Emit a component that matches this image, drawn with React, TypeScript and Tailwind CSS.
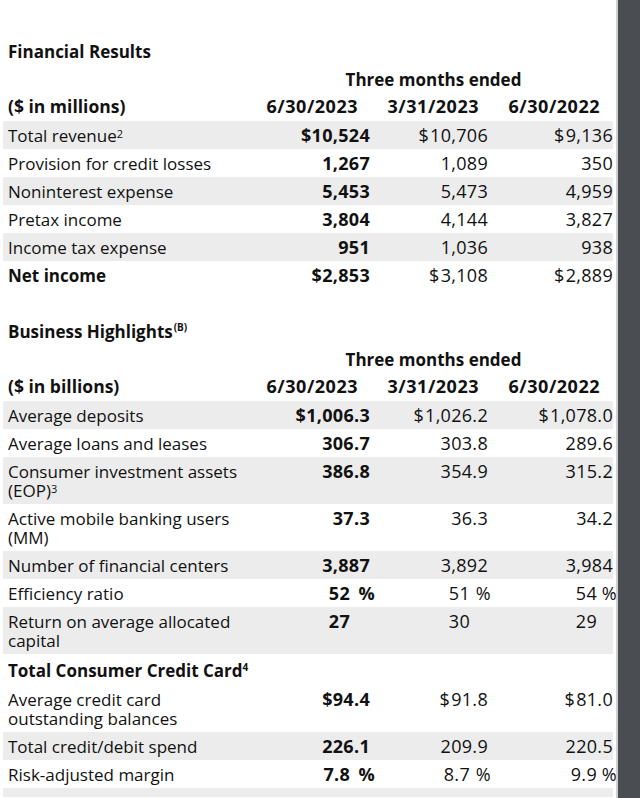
import React from 'react'

type Row = {
  label: string
  sup?: string
  values?: [string, string, string]
  pct?: boolean
  boldLabel?: boolean
  heading?: boolean
}

const financial: Row[] = [
  { label: 'Total revenue', sup: '2', values: ['$10,524', '$10,706', '$9,136'] },
  { label: 'Provision for credit losses', values: ['1,267', '1,089', '350'] },
  { label: 'Noninterest expense', values: ['5,453', '5,473', '4,959'] },
  { label: 'Pretax income', values: ['3,804', '4,144', '3,827'] },
  { label: 'Income tax expense', values: ['951', '1,036', '938'] },
  { label: 'Net income', boldLabel: true, values: ['$2,853', '$3,108', '$2,889'] },
]

const business: Row[] = [
  { label: 'Average deposits', values: ['$1,006.3', '$1,026.2', '$1,078.0'] },
  { label: 'Average loans and leases', values: ['306.7', '303.8', '289.6'] },
  { label: 'Consumer investment assets (EOP)', sup: '3', values: ['386.8', '354.9', '315.2'] },
  { label: 'Active mobile banking users (MM)', values: ['37.3', '36.3', '34.2'] },
  { label: 'Number of financial centers', values: ['3,887', '3,892', '3,984'] },
  { label: 'Efficiency ratio', pct: true, values: ['52', '51', '54'] },
  { label: 'Return on average allocated capital', pct: true, values: ['27', '30', '29'] },
  { label: 'Total Consumer Credit Card', sup: '4', heading: true },
  { label: 'Average credit card outstanding balances', values: ['$94.4', '$91.8', '$81.0'] },
  { label: 'Total credit/debit spend', values: ['226.1', '209.9', '220.5'] },
  { label: 'Risk-adjusted margin', pct: true, values: ['7.8', '8.7', '9.9'] },
  { label: '' },
]

const grid = 'mx-[3px] grid grid-cols-[242px_120px_118px_125px] pl-[5px] pr-[2px]'

// "%" sits just past the column edge, so numbers stay aligned with the % rows
const pctCls = [
  'w-[25px] -mr-[5px] text-right',
  'w-[21px] -mr-[3px] text-right',
  'w-[20px] -mr-[4px] text-right',
]

function TableHead({ title, titleSup, unit }: { title: string; titleSup?: string; unit: string }) {
  return (
    <div>
      <div className="pl-[8px] text-[17px] font-bold leading-[28px]">
        {title}
        {titleSup && <sup className="text-[10px] font-bold ml-[1px] -top-[7px]">{titleSup}</sup>}
      </div>
      <div className={grid + ' text-[17px] font-bold leading-[28px]'}>
        <div className="col-start-2 col-span-3 text-center pl-[4px]">Three months ended</div>
      </div>
      <div className={grid + ' text-[17px] font-bold leading-[24px] mb-[3px]'}>
        <div className="text-[17.5px]">{unit}</div>
        <div className="text-right pr-[12px] text-[18px] tracking-[0.5px]">6/30/2023</div>
        <div className="text-right pr-[9px] text-[18px] tracking-[0.5px]">3/31/2023</div>
        <div className="text-right pr-[13px] text-[18px] tracking-[0.5px]">6/30/2022</div>
      </div>
    </div>
  )
}

function Value({ v, first }: { v: string; first: boolean }) {
  // the regular-weight dollar sign sits a little apart from the digits
  if (!first && v.startsWith('$')) {
    return (
      <span>
        <span className="mr-[1px]">$</span>
        {v.slice(1)}
      </span>
    )
  }
  return <span>{v}</span>
}

function DataRow({ row, gray }: { row: Row; gray: boolean }) {
  const bold = row.boldLabel || row.heading
  return (
    <div
      className={
        grid +
        ' text-[17px] leading-[19px] ' +
        (gray ? 'bg-[#ececec]' : 'bg-white') +
        (row.heading ? ' pt-[7px] pb-[5px]' : ' pt-[5px] pb-[4px]')
      }
    >
      <div className={bold ? 'font-bold' : ''}>
        {row.label}
        {row.sup && (
          <sup
            className={
              row.heading ? 'text-[10px] font-bold -top-[6px] leading-none' : 'text-[11px] -top-[4px] leading-none'
            }
          >
            {row.sup}
          </sup>
        )}
      </div>
      {row.values &&
        row.values.map((v, i) => (
          <div
            key={i}
            className={'flex justify-end text-[18px] tracking-[0.3px] ' + (i === 0 ? 'font-bold' : '')}
          >
            <Value v={v} first={i === 0} />
            {row.pct && (
              <span className={pctCls[i] + (row.label.startsWith('Return') ? ' invisible' : '')}>%</span>
            )}
          </div>
        ))}
    </div>
  )
}

function Rows({ rows }: { rows: Row[] }) {
  let n = 0
  return (
    <div>
      {rows.map((r) => {
        const gray = !r.heading && n++ % 2 === 0
        return <DataRow key={r.label} row={r} gray={gray} />
      })}
    </div>
  )
}

export default function App() {
  return (
    <div className="flex h-[798px] overflow-hidden bg-white text-[#111] font-['Open_Sans',sans-serif]">
      <main className="w-[616px] shrink-0 pt-[38px]">
        <TableHead title="Financial Results" unit="($ in millions)" />
        <Rows rows={financial} />

        <div className="mt-[29px]">
          <TableHead title="Business Highlights" titleSup="(B)" unit="($ in billions)" />
          <Rows rows={business} />
        </div>
      </main>
      <div className="flex-1 border-l-[2px] border-[#cfcfcf] bg-[#4a4e52]" />
    </div>
  )
}
